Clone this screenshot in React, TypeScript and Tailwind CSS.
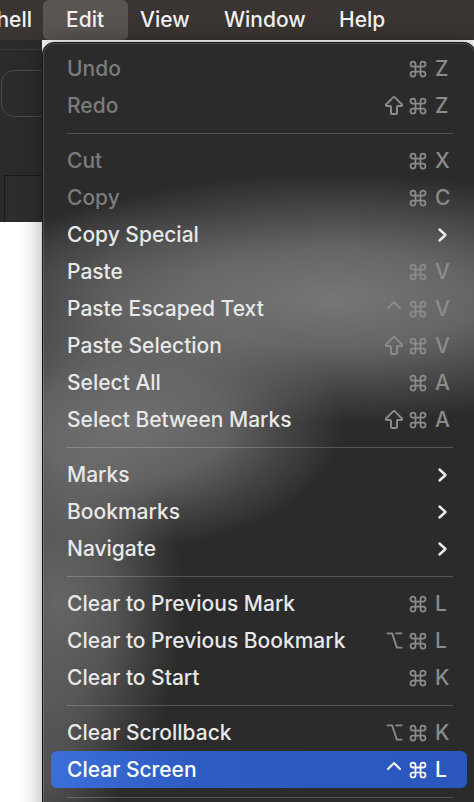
import React from "react";
import { Command, ArrowBigUp, Option, ChevronUp } from "lucide-react";

type Item =
  | { kind: "sep" }
  | { kind: "item"; label: string; disabled?: boolean; mod?: "shift" | "ctrl" | "opt"; key?: string; sub?: boolean; active?: boolean };

const items: Item[] = [
  { kind: "item", label: "Undo", disabled: true, key: "Z" },
  { kind: "item", label: "Redo", disabled: true, mod: "shift", key: "Z" },
  { kind: "sep" },
  { kind: "item", label: "Cut", disabled: true, key: "X" },
  { kind: "item", label: "Copy", disabled: true, key: "C" },
  { kind: "item", label: "Copy Special", sub: true },
  { kind: "item", label: "Paste", key: "V" },
  { kind: "item", label: "Paste Escaped Text", mod: "ctrl", key: "V" },
  { kind: "item", label: "Paste Selection", mod: "shift", key: "V" },
  { kind: "item", label: "Select All", key: "A" },
  { kind: "item", label: "Select Between Marks", mod: "shift", key: "A" },
  { kind: "sep" },
  { kind: "item", label: "Marks", sub: true },
  { kind: "item", label: "Bookmarks", sub: true },
  { kind: "item", label: "Navigate", sub: true },
  { kind: "sep" },
  { kind: "item", label: "Clear to Previous Mark", key: "L" },
  { kind: "item", label: "Clear to Previous Bookmark", mod: "opt", key: "L" },
  { kind: "item", label: "Clear to Start", key: "K" },
  { kind: "sep" },
  { kind: "item", label: "Clear Scrollback", mod: "opt", key: "K" },
  { kind: "item", label: "Clear Screen", mod: "ctrl", key: "L", active: true },
  { kind: "sep" },
];

function Chevron() {
  return (
    <svg width="11" height="16" viewBox="0 0 11 16" className="ml-[2px]">
      <path d="M2.5 2.5 L8.5 8 L2.5 13.5" fill="none" stroke="#ececec" strokeWidth="2.4" strokeLinecap="round" strokeLinejoin="round" />
    </svg>
  );
}

function Mod({ mod }: { mod?: "shift" | "ctrl" | "opt" }) {
  if (mod === "shift") return <ArrowBigUp size={24} strokeWidth={2} />;
  if (mod === "opt") return <Option size={19} strokeWidth={2.3} />;
  if (mod === "ctrl") return <ChevronUp size={24} strokeWidth={2} className="-translate-y-[4px]" />;
  return null;
}

function Row({ it }: { it: Extract<Item, { kind: "item" }> }) {
  const textColor = it.active ? "text-white" : it.disabled ? "text-[#7c7c7c]" : "text-[#e8e8e8]";
  const scColor = it.active ? "text-white" : "text-[#8b8b8b]";
  return (
    <div
      className={
        "mx-[8px] h-[37px] rounded-[6px] flex items-center pl-[16px] pr-[14px] " +
        (it.active ? "bg-[linear-gradient(90deg,#3b6fd8,#2d5bc2_35%,#2b57bd)]" : "")
      }
    >
      <span className={"text-[21px] font-[450] leading-none " + textColor}>{it.label}</span>
      <div className="ml-auto flex items-center">
        {it.sub ? (
          <div className="w-[18px] flex justify-start">
            <Chevron />
          </div>
        ) : (
          <div className={"flex items-center " + scColor}>
            <span className="w-[24px] h-[24px] flex items-center justify-center">
              <Mod mod={it.mod} />
            </span>
            <span className="w-[24px] h-[24px] flex items-center justify-center">
              <Command size={20} strokeWidth={2.1} />
            </span>
            <span className="ml-[5px] w-[18px] text-left text-[21px] font-[450] leading-none">{it.key}</span>
          </div>
        )}
      </div>
    </div>
  );
}

export default function App() {
  return (
    <div className="relative w-[474px] h-[802px] overflow-hidden bg-white font-['Inter','Liberation_Sans',sans-serif]">
      {/* Menu bar */}
      <div className="h-[40px] bg-[#3a3532] flex items-center text-[21px] font-medium text-[#f2f2f2] whitespace-nowrap">
        <div className="w-[43px] flex justify-end pr-[11px] overflow-hidden">
          <span>Shell</span>
        </div>
        <div className="h-[40px] w-[85px] rounded-[6px] bg-[#5a5452] flex items-center pl-[23px]">Edit</div>
        <div className="w-[96px] pl-[12px]">View</div>
        <div className="w-[115px]">Window</div>
        <div>Help</div>
      </div>

      {/* Window content behind the menu */}
      <div className="w-[42px] overflow-hidden">
        <div className="h-[182px] bg-[#2b2b2b] flex flex-col">
          <div className="h-[10px] border-b border-[#3a3a3a]" />
          <div className="mt-[20px] ml-[1px] h-[47px] w-[120px] rounded-[13px] border border-[#4a4a4a]" />
          <div className="mt-[58px] ml-[4px] flex-1 border-l border-t border-[#1b1b1b] bg-[#2d2d2d]" />
        </div>
      </div>

      {/* Menu */}
      <div className="absolute left-[42px] top-[42px] w-[434px] h-[800px] rounded-[12px] border border-[#161616] bg-[#2b2b2b] [background-image:radial-gradient(ellipse_360px_125px_at_290px_255px,rgba(125,125,125,0.92),rgba(120,120,120,0.75)_40%,rgba(110,110,110,0.35)_75%,transparent),radial-gradient(ellipse_180px_100px_at_80px_260px,rgba(100,100,100,0.6),transparent),radial-gradient(ellipse_210px_125px_at_90px_380px,rgba(120,120,120,0.9),rgba(120,120,120,0.7)_45%,rgba(120,120,120,0.3)_75%,transparent),radial-gradient(ellipse_125px_215px_at_15px_560px,rgba(112,112,112,0.85),rgba(112,112,112,0.6)_45%,rgba(112,112,112,0.2)_80%,transparent),radial-gradient(ellipse_75px_125px_at_0px_735px,rgba(100,100,100,0.6),transparent)] shadow-[0_0_24px_rgba(0,0,0,0.35),inset_0_0_0_1px_rgba(255,255,255,0.16)]">
        <div className="pt-[7px] flex flex-col">
          {items.map((it, i) =>
            it.kind === "sep" ? (
              <div key={i} className="h-[18px] flex items-center pl-[24px] pr-[22px]">
                <div className="h-px w-full bg-[rgba(255,255,255,0.2)]" />
              </div>
            ) : (
              <Row key={i} it={it} />
            )
          )}
        </div>
      </div>
    </div>
  );
}
